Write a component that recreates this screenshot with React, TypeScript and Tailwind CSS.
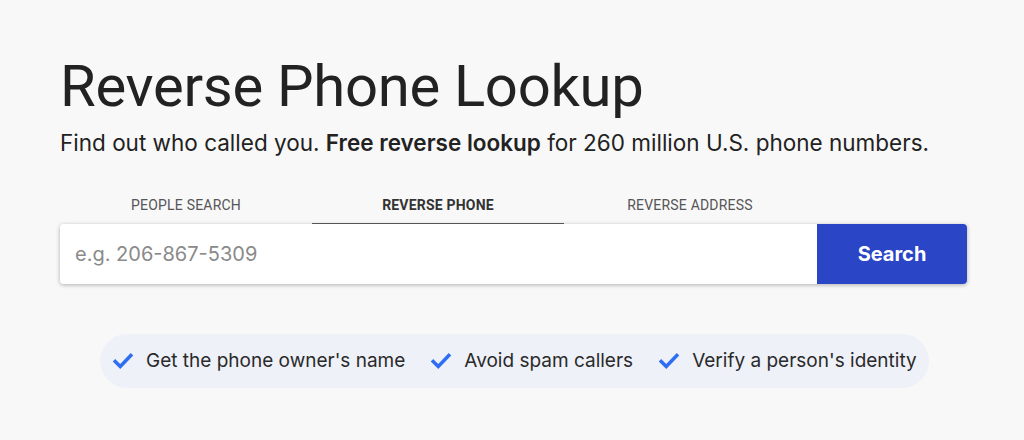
import { useState } from 'react';

const tabs = ['People Search', 'Reverse Phone', 'Reverse Address'];
const perks = ["Get the phone owner's name", 'Avoid spam callers', "Verify a person's identity"];

function Check() {
  return (
    <svg width="22" height="22" viewBox="0 0 24 24" className="shrink-0">
      <path d="M3.5 12.5l5.5 5.5L20.5 6" fill="none" stroke="#2f6ef2" strokeWidth="3.8" strokeLinecap="square" />
    </svg>
  );
}

export default function App() {
  const [active, setActive] = useState(1);
  const [phone, setPhone] = useState('');

  return (
    <main className="min-h-screen w-full bg-[#f8f8f8] text-[#222] font-['Roboto',sans-serif]">
      <div className="pl-[60px] pt-[50px]">
        <h1 className="text-[58px] leading-[72px] font-normal tracking-[-0.3px] text-[#222]">Reverse Phone Lookup</h1>
        <p className="mt-[6px] font-['Inter',sans-serif] text-[22.5px] leading-[30px] text-[#222]">
          Find out who called you. <span className="font-semibold">Free reverse lookup</span> for 260 million U.S. phone numbers.
        </p>

        <div className="mt-[30px] w-[907px]">
          <div className="flex w-[756px]">
            {tabs.map((t, i) => (
              <button
                key={t}
                type="button"
                onClick={() => setActive(i)}
                className={`w-[252px] h-[36px] text-[14px] uppercase tracking-[0.2px] border-b ${
                  i === active ? 'font-bold text-[#333] border-[#555]' : 'text-[#555] border-transparent'
                }`}
              >
                {t}
              </button>
            ))}
          </div>
          <div className="flex h-[60px] rounded-[4px] shadow-[0_1px_4px_rgba(0,0,0,0.3)] font-['Inter',sans-serif]">
            <input
              value={phone}
              onChange={(e) => setPhone(e.target.value)}
              placeholder="e.g. 206-867-5309"
              className="flex-1 bg-white rounded-l-[4px] px-[15px] text-[20px] text-[#222] placeholder:text-[#8a8a8a] focus:outline-none"
            />
            <button type="button" className="w-[150px] bg-[#2a45c6] text-white text-[20px] font-bold rounded-r-[4px]">
              Search
            </button>
          </div>
        </div>
      </div>

      <div className="flex justify-start pl-[100px] mt-[50px]">
        <div className="flex items-center gap-[25px] h-[54px] px-[12px] rounded-full bg-[#eef1f8] font-['Inter',sans-serif] text-[19px] text-[#2a2a2a]">
          {perks.map((p) => (
            <div key={p} className="flex items-center gap-[12px]">
              <Check />
              <span>{p}</span>
            </div>
          ))}
        </div>
      </div>
    </main>
  );
}
